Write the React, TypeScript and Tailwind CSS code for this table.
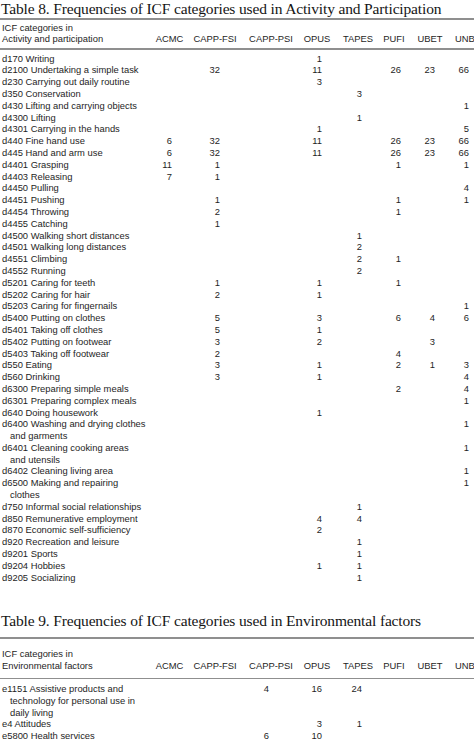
import React from "react";

type Col = { name: string; head: string; num: string };

const COLS: Col[] = [
  { name: "ACMC", head: "justify-center", num: "pr-[17px]" },
  { name: "CAPP-FSI", head: "justify-center", num: "pr-[21px]" },
  { name: "CAPP-PSI", head: "justify-center", num: "pr-[32px]" },
  { name: "OPUS", head: "justify-center", num: "pr-[11px]" },
  { name: "TAPES", head: "justify-center", num: "pr-[21px]" },
  { name: "PUFI", head: "justify-center", num: "pr-[4px]" },
  { name: "UBET", head: "justify-center", num: "pr-[20px]" },
  { name: "UNB", head: "justify-start", num: "pr-[26px]" },
];

const GRID =
  "grid grid-cols-[150px_39px_52px_60px_32px_50px_22px_50px_40px] w-[495px]";

type Row = { label: string[]; v: Record<string, number> };

const r = (label: string | string[], v: Record<string, number> = {}): Row => ({
  label: Array.isArray(label) ? label : [label],
  v,
});

const TABLE8: Row[] = [
  r("d170 Writing", { OPUS: 1 }),
  r("d2100 Undertaking a simple task", { "CAPP-FSI": 32, OPUS: 11, PUFI: 26, UBET: 23, UNB: 66 }),
  r("d230 Carrying out daily routine", { OPUS: 3 }),
  r("d350 Conservation", { TAPES: 3 }),
  r("d430 Lifting and carrying objects", { UNB: 1 }),
  r("d4300 Lifting", { TAPES: 1 }),
  r("d4301 Carrying in the hands", { OPUS: 1, UNB: 5 }),
  r("d440 Fine hand use", { ACMC: 6, "CAPP-FSI": 32, OPUS: 11, PUFI: 26, UBET: 23, UNB: 66 }),
  r("d445 Hand and arm use", { ACMC: 6, "CAPP-FSI": 32, OPUS: 11, PUFI: 26, UBET: 23, UNB: 66 }),
  r("d4401 Grasping", { ACMC: 11, "CAPP-FSI": 1, PUFI: 1, UNB: 1 }),
  r("d4403 Releasing", { ACMC: 7, "CAPP-FSI": 1 }),
  r("d4450 Pulling", { UNB: 4 }),
  r("d4451 Pushing", { "CAPP-FSI": 1, PUFI: 1, UNB: 1 }),
  r("d4454 Throwing", { "CAPP-FSI": 2, PUFI: 1 }),
  r("d4455 Catching", { "CAPP-FSI": 1 }),
  r("d4500 Walking short distances", { TAPES: 1 }),
  r("d4501 Walking long distances", { TAPES: 2 }),
  r("d4551 Climbing", { TAPES: 2, PUFI: 1 }),
  r("d4552 Running", { TAPES: 2 }),
  r("d5201 Caring for teeth", { "CAPP-FSI": 1, OPUS: 1, PUFI: 1 }),
  r("d5202 Caring for hair", { "CAPP-FSI": 2, OPUS: 1 }),
  r("d5203 Caring for fingernails", { UNB: 1 }),
  r("d5400 Putting on clothes", { "CAPP-FSI": 5, OPUS: 3, PUFI: 6, UBET: 4, UNB: 6 }),
  r("d5401 Taking off clothes", { "CAPP-FSI": 5, OPUS: 1 }),
  r("d5402 Putting on footwear", { "CAPP-FSI": 3, OPUS: 2, UBET: 3 }),
  r("d5403 Taking off footwear", { "CAPP-FSI": 2, PUFI: 4 }),
  r("d550 Eating", { "CAPP-FSI": 3, OPUS: 1, PUFI: 2, UBET: 1, UNB: 3 }),
  r("d560 Drinking", { "CAPP-FSI": 3, OPUS: 1, UNB: 4 }),
  r("d6300 Preparing simple meals", { PUFI: 2, UNB: 4 }),
  r("d6301 Preparing complex meals", { UNB: 1 }),
  r("d640 Doing housework", { OPUS: 1 }),
  r(["d6400 Washing and drying clothes", "and garments"], { UNB: 1 }),
  r(["d6401 Cleaning cooking areas", "and utensils"], { UNB: 1 }),
  r("d6402 Cleaning living area", { UNB: 1 }),
  r(["d6500 Making and repairing", "clothes"], { UNB: 1 }),
  r("d750 Informal social relationships", { TAPES: 1 }),
  r("d850 Remunerative employment", { OPUS: 4, TAPES: 4 }),
  r("d870 Economic self-sufficiency", { OPUS: 2 }),
  r("d920 Recreation and leisure", { TAPES: 1 }),
  r("d9201 Sports", { TAPES: 1 }),
  r("d9204 Hobbies", { OPUS: 1, TAPES: 1 }),
  r("d9205 Socializing", { TAPES: 1 }),
];

const TABLE9: Row[] = [
  r(["e1151 Assistive products and", "technology for personal use in", "daily living"], {
    "CAPP-PSI": 4,
    OPUS: 16,
    TAPES: 24,
  }),
  r("e4 Attitudes", { OPUS: 3, TAPES: 1 }),
  r("e5800 Health services", { "CAPP-PSI": 6, OPUS: 10 }),
];

function Rule() {
  return <div className="h-[1.5px] w-full bg-[#8f8f8f]" />;
}

type TableProps = {
  title: string;
  head: string;
  rows: Row[];
  loose?: boolean;
};

function Table({ title, head, rows, loose }: TableProps) {
  return (
    <section>
      <h2 className="font-['Liberation_Serif',serif] text-[15.5px] leading-[17px] tracking-[-0.15px] text-[#151515] pl-[1px]">
        {title}
      </h2>
      <div className={loose ? "mt-[8px]" : "mt-[1px]"}>
        <Rule />
      </div>
      <div
        className={`${GRID} ${loose ? "pt-[9px] pb-[5px] leading-[12.5px]" : "pt-[2px] pb-[3px]"}`}
      >
        <div className="pl-[2px]">
          <div>ICF categories in</div>
          <div>{head}</div>
        </div>
        {COLS.map((c) => (
          <div key={c.name} className={`flex items-end whitespace-nowrap ${c.head}`}>
            {c.name}
          </div>
        ))}
      </div>
      <Rule />
      <div className={loose ? "pt-[4px] leading-[11.6px]" : "pt-[3px]"}>
        {rows.map((row) => (
          <div key={row.label[0]} className={GRID}>
            <div className="pl-[2px] whitespace-nowrap">
              {row.label.map((line, i) => (
                <div key={line} className={i > 0 ? "pl-[8px]" : undefined}>
                  {line}
                </div>
              ))}
            </div>
            {COLS.map((c) => (
              <div key={c.name} className={`text-right ${c.num}`}>
                {row.v[c.name] ?? ""}
              </div>
            ))}
          </div>
        ))}
      </div>
    </section>
  );
}

export default function App() {
  return (
    <div className="w-[474px] h-[740px] overflow-hidden bg-white text-[#1e1e1e] font-['Liberation_Sans',Arial,sans-serif] text-[9.4px] leading-[11.8px]">
      <Table
        title="Table 8. Frequencies of ICF categories used in Activity and Participation"
        head="Activity and participation"
        rows={TABLE8}
      />
      <div className="h-[29px]" />
      <Table
        title="Table 9. Frequencies of ICF categories used in Environmental factors"
        head="Environmental factors"
        rows={TABLE9}
        loose
      />
    </div>
  );
}
